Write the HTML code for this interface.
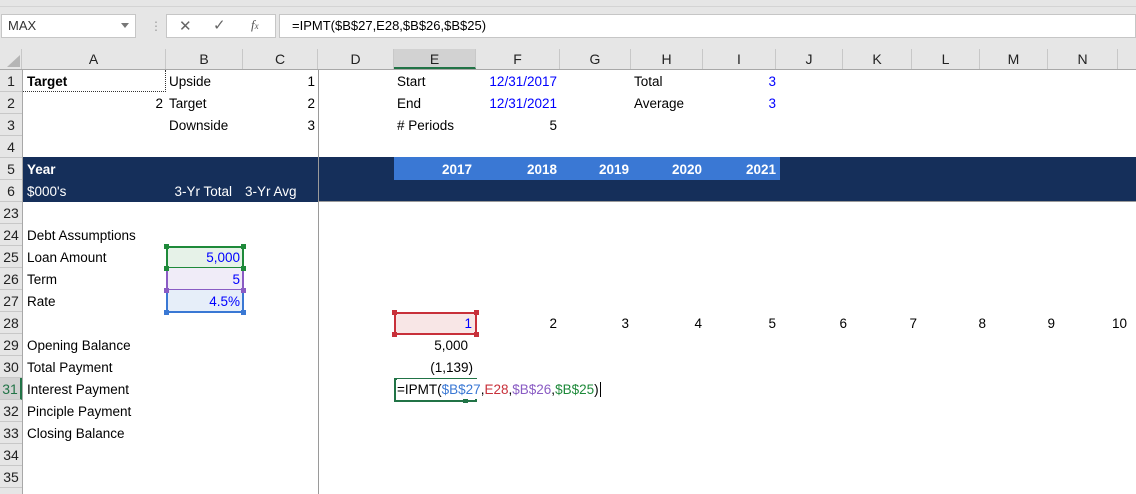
<!DOCTYPE html>
<html><head><meta charset="utf-8"><style>
*{margin:0;padding:0;box-sizing:border-box}
body{width:1136px;height:494px;overflow:hidden;background:#fff;font-family:"Liberation Sans",sans-serif;font-size:13.5px;color:#000;position:relative}
div{position:absolute}
.t{height:22px;line-height:24px;white-space:nowrap}
.r{text-align:right}
.b{font-weight:bold}
.bl{color:#0000ff}
.w{color:#fff}
.rh{left:0;width:22px;height:22px;line-height:23px;text-align:center;background:#e6e6e6;border-bottom:1px solid #c8c8c8;color:#222;font-size:14px}
.ch{top:49px;height:20px;line-height:21px;text-align:center;background:#e6e6e6;border-right:1px solid #c8c8c8;color:#222;font-size:14px}
</style></head><body>
<div style="left:0;top:0;width:1136px;height:49px;background:#e6e6e6"></div>
<div style="left:0;top:6px;width:1136px;height:1px;background:#d4d4d4"></div>
<div style="left:1px;top:14px;width:135px;height:24px;background:#fff;border:1px solid #c6c6c6;line-height:22px;padding-left:6px;font-size:13px;color:#333">MAX</div>
<div style="left:121px;top:23px;width:0;height:0;border-left:4px solid transparent;border-right:4px solid transparent;border-top:5px solid #777"></div>
<div style="left:150px;top:19px;color:#999;font-size:12px">⋮</div>
<div style="left:166px;top:14px;width:110px;height:24px;background:#fff;border:1px solid #c6c6c6"></div>
<div style="left:179px;top:17px;color:#666;font-size:15px">✕</div>
<div style="left:213px;top:16px;color:#666;font-size:15px">✓</div>
<div style="left:251px;top:17px;color:#555;font-size:13px;font-style:italic;font-family:'Liberation Serif',serif">f<span style="font-size:9px">x</span></div>
<div style="left:279px;top:14px;width:857px;height:24px;background:#fff;border:1px solid #c6c6c6;line-height:22px;padding-left:12px;font-size:13px">=IPMT($B$27,E28,$B$26,$B$25)</div>
<div style="left:0;top:49px;width:1136px;height:21px;background:#e6e6e6;border-bottom:1px solid #a8a8a8"></div>
<div style="left:0;top:49px;width:22px;height:20px;border-right:1px solid #c8c8c8"></div>
<div style="left:7px;top:55px;width:0;height:0;border-left:13px solid transparent;border-bottom:12px solid #b5b5b5"></div>
<div class="ch" style="left:22px;width:144px">A</div>
<div class="ch" style="left:166px;width:77px">B</div>
<div class="ch" style="left:243px;width:75px">C</div>
<div class="ch" style="left:318px;width:76px">D</div>
<div class="ch" style="left:394px;width:82px;background:#d2d2d2;border-bottom:2px solid #217346">E</div>
<div class="ch" style="left:476px;width:84px">F</div>
<div class="ch" style="left:560px;width:71px">G</div>
<div class="ch" style="left:631px;width:72px">H</div>
<div class="ch" style="left:703px;width:73px">I</div>
<div class="ch" style="left:776px;width:67px">J</div>
<div class="ch" style="left:843px;width:69px">K</div>
<div class="ch" style="left:912px;width:68px">L</div>
<div class="ch" style="left:980px;width:68px">M</div>
<div class="ch" style="left:1048px;width:70px">N</div>
<div style="left:0;top:70px;width:23px;height:424px;background:#e6e6e6;border-right:1px solid #a8a8a8"></div>
<div class="rh" style="top:70px">1</div>
<div class="rh" style="top:92px">2</div>
<div class="rh" style="top:114px">3</div>
<div class="rh" style="top:136px">4</div>
<div class="rh" style="top:158px">5</div>
<div class="rh" style="top:180px">6</div>
<div class="rh" style="top:202px">23</div>
<div class="rh" style="top:224px">24</div>
<div class="rh" style="top:246px">25</div>
<div class="rh" style="top:268px">26</div>
<div class="rh" style="top:290px">27</div>
<div class="rh" style="top:312px">28</div>
<div class="rh" style="top:334px">29</div>
<div class="rh" style="top:356px">30</div>
<div class="rh" style="top:378px;background:#d2d2d2;color:#217346;border-right:2px solid #217346">31</div>
<div class="rh" style="top:400px">32</div>
<div class="rh" style="top:422px">33</div>
<div class="rh" style="top:444px">34</div>
<div class="rh" style="top:466px">35</div>
<div style="left:318px;top:70px;width:1px;height:424px;background:#9a9a9a;z-index:3"></div>
<div style="left:23px;top:157px;width:1113px;height:45px;background:#152f5a"></div>
<div style="left:394px;top:157px;width:386px;height:23px;background:#3a78d4"></div>
<div style="left:318px;top:201px;width:818px;height:1px;background:#9a9a9a"></div>
<div style="left:23px;top:70px;width:143px;height:22px;border-right:1px dotted #333;border-bottom:1px dotted #333"></div>
<div class="t b" style="left:27px;top:70px">Target</div>
<div class="t r" style="left:23px;top:92px;width:140px">2</div>
<div class="t" style="left:169px;top:70px">Upside</div>
<div class="t" style="left:169px;top:92px">Target</div>
<div class="t" style="left:169px;top:114px">Downside</div>
<div class="t r" style="left:243px;top:70px;width:72px">1</div>
<div class="t r" style="left:243px;top:92px;width:72px">2</div>
<div class="t r" style="left:243px;top:114px;width:72px">3</div>
<div class="t" style="left:397px;top:70px">Start</div>
<div class="t" style="left:397px;top:92px">End</div>
<div class="t" style="left:397px;top:114px"># Periods</div>
<div class="t r bl" style="left:476px;top:70px;width:81px">12/31/2017</div>
<div class="t r bl" style="left:476px;top:92px;width:81px">12/31/2021</div>
<div class="t r" style="left:476px;top:114px;width:81px">5</div>
<div class="t" style="left:634px;top:70px">Total</div>
<div class="t" style="left:634px;top:92px">Average</div>
<div class="t r bl" style="left:703px;top:70px;width:73px">3</div>
<div class="t r bl" style="left:703px;top:92px;width:73px">3</div>
<div class="t b w" style="left:27px;top:158px">Year</div>
<div class="t w" style="left:27px;top:180px">$000's</div>
<div class="t w r" style="left:160px;top:180px;width:72px">3-Yr Total</div>
<div class="t w" style="left:245px;top:180px">3-Yr Avg</div>
<div class="t b w r" style="left:394px;top:158px;width:78px">2017</div>
<div class="t b w r" style="left:476px;top:158px;width:81px">2018</div>
<div class="t b w r" style="left:560px;top:158px;width:69px">2019</div>
<div class="t b w r" style="left:631px;top:158px;width:71px">2020</div>
<div class="t b w r" style="left:703px;top:158px;width:73px">2021</div>
<div class="t" style="left:27px;top:224px">Debt Assumptions</div>
<div class="t" style="left:27px;top:246px">Loan Amount</div>
<div class="t" style="left:27px;top:268px">Term</div>
<div class="t" style="left:27px;top:290px">Rate</div>
<div class="t" style="left:27px;top:334px">Opening Balance</div>
<div class="t" style="left:27px;top:356px">Total Payment</div>
<div class="t" style="left:27px;top:378px">Interest Payment</div>
<div class="t" style="left:27px;top:400px">Pinciple Payment</div>
<div class="t" style="left:27px;top:422px">Closing Balance</div>
<div style="left:166px;top:246px;width:78px;height:23px;background:#e6f2e8;border:2px solid #1e8a3a"></div>
<div style="left:166px;top:268px;width:78px;height:23px;background:#f0ecf8;border:2px solid #8a5cc4;border-top-width:0"></div>
<div style="left:166px;top:290px;width:78px;height:23px;background:#e6eef9;border:2px solid #3a78d4;border-top-width:0"></div>
<div class="t r bl" style="left:166px;top:246px;width:74px">5,000</div>
<div class="t r bl" style="left:166px;top:268px;width:74px">5</div>
<div class="t r bl" style="left:166px;top:290px;width:74px">4.5%</div>
<div style="left:164px;top:244px;width:5px;height:5px;background:#1e8a3a"></div>
<div style="left:241px;top:244px;width:5px;height:5px;background:#1e8a3a"></div>
<div style="left:164px;top:266px;width:5px;height:5px;background:#1e8a3a"></div>
<div style="left:241px;top:266px;width:5px;height:5px;background:#1e8a3a"></div>
<div style="left:164px;top:288px;width:5px;height:5px;background:#8a5cc4"></div>
<div style="left:241px;top:288px;width:5px;height:5px;background:#8a5cc4"></div>
<div style="left:164px;top:310px;width:5px;height:5px;background:#3a78d4"></div>
<div style="left:241px;top:310px;width:5px;height:5px;background:#3a78d4"></div>
<div style="left:394px;top:312px;width:83px;height:23px;background:#f8e6e6;border:2px solid #c8303a"></div>
<div style="left:392px;top:310px;width:5px;height:5px;background:#c8303a"></div>
<div style="left:474px;top:310px;width:5px;height:5px;background:#c8303a"></div>
<div style="left:392px;top:332px;width:5px;height:5px;background:#c8303a"></div>
<div style="left:474px;top:332px;width:5px;height:5px;background:#c8303a"></div>
<div class="t r bl" style="left:394px;top:312px;width:78px">1</div>
<div class="t r" style="left:476px;top:312px;width:81px">2</div>
<div class="t r" style="left:560px;top:312px;width:69px">3</div>
<div class="t r" style="left:631px;top:312px;width:71px">4</div>
<div class="t r" style="left:703px;top:312px;width:73px">5</div>
<div class="t r" style="left:776px;top:312px;width:71px">6</div>
<div class="t r" style="left:843px;top:312px;width:74px">7</div>
<div class="t r" style="left:912px;top:312px;width:74px">8</div>
<div class="t r" style="left:980px;top:312px;width:75px">9</div>
<div class="t r" style="left:1048px;top:312px;width:79px">10</div>
<div class="t r" style="left:394px;top:334px;width:74px">5,000</div>
<div class="t r" style="left:394px;top:356px;width:79px">(1,139)</div>
<div style="left:394px;top:378px;width:83px;height:24px;border:2px solid #217346"></div>
<div style="left:463px;top:398px;width:5px;height:5px;background:#217346"></div>
<div class="t" style="left:397px;top:379px;height:20px;line-height:22px;background:#fff;padding-right:1px">=IPMT(<span style="color:#3a78d4">$B$27</span>,<span style="color:#c8303a">E28</span>,<span style="color:#8a5cc4">$B$26</span>,<span style="color:#1e8a3a">$B$25</span>)<span style="border-left:1px solid #000;margin-left:1px"></span></div>
</body></html>
